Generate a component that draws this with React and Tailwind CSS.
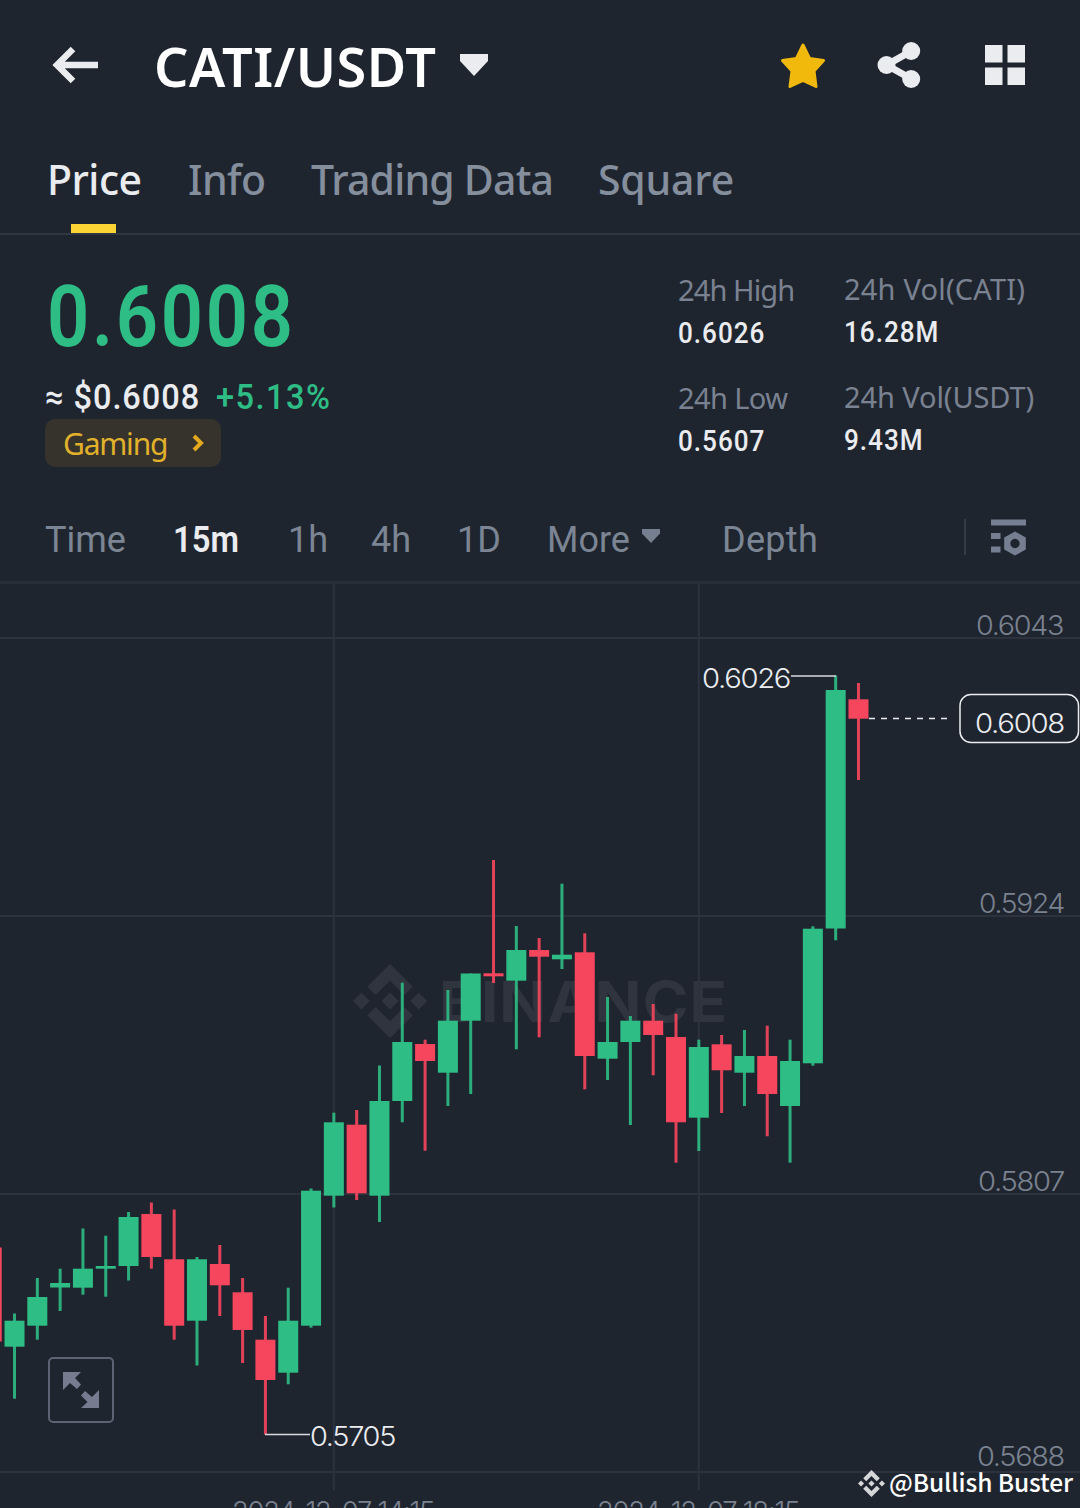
const UP = '#2ebd85';
const DOWN = '#f6465d';

const TABS = [
  { label: 'Price', active: true, className: 'w-[141px] tracking-[-0.5px]' },
  { label: 'Info', className: 'w-[123px] tracking-[-0.6px]' },
  { label: 'Trading Data', className: 'w-[287px] tracking-[-0.8px]' },
  { label: 'Square', className: 'tracking-[-0.2px]' },
];

const STATS = [
  [
    { label: '24h High', value: '0.6026', className: 'tracking-[-0.9px]' },
    { label: '24h Low', value: '0.5607', className: 'tracking-[-0.6px]' },
  ],
  [
    { label: '24h Vol(CATI)', value: '16.28M', className: 'tracking-[0.2px]' },
    { label: '24h Vol(USDT)', value: '9.43M', className: 'tracking-[-0.1px]' },
  ],
];

const INTERVALS = [
  { label: 'Time', className: 'w-[128px]' },
  { label: '15m', active: true, className: 'w-[115px]' },
  { label: '1h', className: 'w-[83px]' },
  { label: '4h', className: 'w-[86px]' },
  { label: '1D', className: 'w-[90px]' },
];

// [up, bodyTop, bodyBottom, high, low]
const CANDLES = [
  [0, 1247.5, 1341.5, 1247.5, 1341.5],
  [1, 1320.7, 1346.7, 1313.5, 1398.7],
  [1, 1297, 1325.7, 1278, 1339.7],
  [1, 1283, 1287.5, 1268.7, 1311],
  [1, 1268.7, 1287.7, 1228.5, 1294.7],
  [1, 1266, 1268.7, 1235.7, 1296.7],
  [1, 1217, 1266, 1212, 1280.5],
  [0, 1214, 1257, 1202.5, 1268.7],
  [0, 1259.3, 1325.7, 1209.5, 1339.7],
  [1, 1259.3, 1320.7, 1257, 1365.5],
  [0, 1264, 1285.3, 1245, 1316],
  [0, 1292.3, 1330, 1278, 1363],
  [0, 1339.7, 1380, 1316, 1434.5],
  [1, 1320.7, 1372.7, 1287.7, 1384.3],
  [1, 1190.7, 1325.7, 1188.5, 1327.7],
  [1, 1122.3, 1195.7, 1112.7, 1207.5],
  [0, 1124.7, 1193.3, 1110, 1200],
  [1, 1101, 1195.7, 1065.5, 1222],
  [1, 1042, 1101, 982.7, 1122.3],
  [0, 1044, 1061, 1039.7, 1150.7],
  [1, 1020.7, 1072.7, 990, 1106],
  [1, 973.5, 1020.7, 973.5, 1094],
  [0, 973.3, 976.3, 860, 983],
  [1, 950, 980.7, 926, 1049.3],
  [0, 950, 956.7, 938, 1037.3],
  [1, 954.7, 959.3, 883.7, 969],
  [0, 952.3, 1056, 933.3, 1089.3],
  [1, 1042, 1058.7, 997, 1080],
  [1, 1020.7, 1042, 1016, 1125],
  [0, 1020.7, 1035, 1004, 1075.3],
  [0, 1037, 1122.3, 1013.7, 1162.7],
  [1, 1047, 1117.7, 1039.7, 1151],
  [0, 1044.3, 1070.3, 1035, 1113],
  [1, 1056, 1072.7, 1030, 1106],
  [0, 1056, 1094, 1025.7, 1136.3],
  [1, 1061, 1106, 1039.7, 1162.7],
  [1, 928.7, 1063.3, 926.3, 1065.7],
  [1, 690, 928.5, 675.5, 940.3],
  [0, 699.3, 718.7, 683, 780],
];

const LOGO =
  'M38.73 53.2l24.59-24.58 24.6 24.6 14.3-14.31L63.32 0 24.43 38.9zM0 63.31l14.3-14.31 14.31 14.31-14.31 14.3zM38.73 73.41l24.59 24.59 24.6-24.6 14.31 14.29-38.9 38.91-38.91-38.88zM98 63.31l14.3-14.31 14.31 14.3-14.31 14.32zM77.83 63.3L63.32 48.78 48.78 63.3l14.53 14.53z';

const Header = () => (
  <header className="flex h-[130px] items-center pl-[52px] pr-[55px]">
    <svg width="46" height="38" viewBox="0 0 46 38" fill="none" stroke="#eaecef" strokeWidth="6.5">
      <path d="M4 19H46M21 3L5 19l16 16" />
    </svg>
    <h1 className="ml-[56px] w-[306px] whitespace-nowrap pt-[2px] text-[54px] font-semibold leading-none tracking-[0.5px] text-white">
      CATI/USDT
    </h1>
    <svg width="28" height="22" viewBox="0 0 28 22" fill="#eaecef">
      <path d="M0 0H28V7L14 22L0 7Z" />
    </svg>
    <svg className="ml-auto" width="46" height="46" viewBox="0 0 46 46">
      <path
        d="M23 3L29.5 16.5L43.5 18.5L34 29L36 44.5L23 38.5L10 44.5L12 29L2.5 18.5L16.5 16.5Z"
        fill="#f0b90b"
        stroke="#f0b90b"
        strokeWidth="3"
        strokeLinejoin="round"
      />
    </svg>
    <svg className="ml-[51px]" width="44" height="46" viewBox="0 0 44 46" fill="#eaecef">
      <path d="M34.5 9L9.5 23l25 14" fill="none" stroke="#eaecef" strokeWidth="7" />
      <circle cx="9.5" cy="23" r="9" />
      <circle cx="34.2" cy="9" r="9" />
      <circle cx="34.2" cy="37" r="9" />
    </svg>
    <svg className="ml-[64px]" width="40" height="40" viewBox="0 0 40 40" fill="#eaecef">
      <path d="M0 0h17.5v17.5H0zM22.5 0H40v17.5H22.5zM0 22.5h17.5V40H0zM22.5 22.5H40V40H22.5z" />
    </svg>
  </header>
);

const Tabs = () => (
  <nav className="flex h-[105px] border-b-2 border-[#2f3641] pl-[47px] pt-[21px] text-[41px] font-medium leading-[56px]">
    {TABS.map((tab) => (
      <div key={tab.label} className={tab.className}>
        <div className={`w-fit whitespace-nowrap ${tab.active ? 'text-[#eaecef]' : 'text-[#848e9c]'}`}>
          {tab.label}
          {tab.active && <div className="ml-6 mt-[17px] h-[9px] w-[45px] bg-[#fcd535]" />}
        </div>
      </div>
    ))}
  </nav>
);

const Summary = () => (
  <section className="flex h-[265px] pl-[45px] pt-[30px]">
    <div className="w-[633px]">
      <div className="ml-[2px] h-[102px] origin-left scale-x-[0.86] font-[Roboto] text-[86px] font-semibold leading-[104px] tracking-[3.2px] text-[#2ebd85]">
        0.6008
      </div>
      <div className="flex h-[52px] items-center pt-[8px] font-[Roboto] text-[35px] font-medium leading-none">
        <span className="w-[171px] origin-left scale-x-[0.93] whitespace-nowrap tracking-[1px] text-[#eaecef]">
          ≈ $0.6008
        </span>
        <span className="origin-left scale-x-[0.93] tracking-[1.6px] text-[#2ebd85]">+5.13%</span>
      </div>
      <div className="flex h-12 w-[176px] items-center rounded-[10px] bg-[#35332c] pl-[18px] text-[30px] text-[#e2b12b]">
        <span className="w-[129px] pt-[2px] leading-none tracking-[-1.2px]">Gaming</span>
        <svg width="12" height="18" viewBox="0 0 12 18" fill="none" stroke="#e2a91e" strokeWidth="4">
          <path d="M2 2l7 7-7 7" />
        </svg>
      </div>
    </div>
    {STATS.map((column, i) => (
      <div key={i} className={i === 0 ? 'w-[166px] pt-[4px]' : 'pt-[3px]'}>
        {column.map((stat) => (
          <div key={stat.label} className="h-[108px] whitespace-nowrap">
            <div className={`text-[29px] leading-[41px] text-[#7a8291] ${stat.className}`}>{stat.label}</div>
            <div className="origin-left scale-x-[0.9] pt-[2px] font-[Roboto] text-[29px] font-medium leading-[42px] tracking-[1.1px] text-[#eaecef]">
              {stat.value}
            </div>
          </div>
        ))}
      </div>
    ))}
  </section>
);

const IntervalBar = () => (
  <nav className="flex h-[84px] items-center border-b-[3px] border-[#282e38] pl-[45px] font-[Roboto] text-[36px] leading-none text-[#7c8594]">
    {INTERVALS.map((item) => (
      <div
        key={item.label}
        className={`whitespace-nowrap pb-[2px] ${item.className} ${
          item.active ? 'origin-left scale-x-[0.91] font-semibold text-[#eaecef]' : ''
        }`}
      >
        {item.label}
      </div>
    ))}
    <div className="flex w-[175px] items-center pb-[2px]">
      <span className="w-[95px]">More</span>
      <svg className="-mt-2" width="18" height="14" viewBox="0 0 18 14" fill="#767f8f">
        <path d="M0 0H18V4.5L9 14L0 4.5Z" />
      </svg>
    </div>
    <div className="pb-[2px] tracking-[0.3px]">Depth</div>
    <div className="ml-auto mr-[53px] flex items-center pb-[7px]">
      <div className="mr-[25px] h-9 w-[2.5px] bg-[#343b47]" />
      <svg width="36" height="37" viewBox="0 0 36 37" fill="#767f92">
        <path d="M0 0.5h35v6H0zM0 14h9.5v6H0zM0 27.5h9.5v6H0z" />
        <path
          fillRule="evenodd"
          d="M24 12.5L34.8 18.5V30.5L24 36.5L13.2 30.5V18.5ZM24 19.8a4.7 4.7 0 1 0 0.01 0Z"
        />
      </svg>
    </div>
  </nav>
);

const AxisText = ({ x, y, width = 87, fill = '#7b828f', children }) => (
  <text x={x} y={y} textLength={width} lengthAdjust="spacingAndGlyphs" fill={fill}>
    {children}
  </text>
);

const Chart = () => (
  <div className="relative h-[924px]">
    <svg
      className="block font-[Inter] text-[26.5px] font-light tracking-[-1.2px]"
      width="1080"
      height="924"
      viewBox="0 584 1080 924"
    >
      <g fill="#30343f">
        <path d={LOGO} transform="translate(353 964) scale(0.585)" />
        <text
          x="439"
          y="1022"
          className="text-[57px] font-bold tracking-[1px]"
          textLength="289"
          lengthAdjust="spacingAndGlyphs"
        >
          BINANCE
        </text>
      </g>

      <g stroke="#2d333e" strokeWidth="2">
        {[638, 916, 1194, 1472].map((y) => (
          <line key={y} x1="0" x2="1080" y1={y} y2={y} />
        ))}
        {[333.8, 698.8].map((x) => (
          <line key={x} x1={x} x2={x} y1="584" y2="1490" />
        ))}
      </g>

      {CANDLES.map(([up, top, bottom, high, low], i) => {
        const x = -8.3 + i * 22.81;
        return (
          <g key={i} fill={up ? UP : DOWN}>
            <rect x={x - 1.5} y={high} width="3" height={low - high} opacity="0.9" />
            <rect x={x - 10} y={top} width="20" height={bottom - top} />
          </g>
        );
      })}

      <AxisText x="976" y="635">0.6043</AxisText>
      <AxisText x="979" y="913" width={85}>0.5924</AxisText>
      <AxisText x="978" y="1191" width={86}>0.5807</AxisText>
      <AxisText x="977" y="1466">0.5688</AxisText>
      <AxisText x="232" y="1521" width={202}>2024-12-07 14:15</AxisText>
      <AxisText x="597" y="1521" width={202}>2024-12-07 18:15</AxisText>

      <AxisText x="702" y="688" width={88} fill="#eaecef">0.6026</AxisText>
      <path d="M791 676H836M265 1434.5H310" stroke="#d8dade" strokeWidth="1.7" />
      <AxisText x="310" y="1446" width={85} fill="#eaecef">0.5705</AxisText>

      <path d="M869 718.5H947" stroke="#eaecef" strokeWidth="1.5" strokeDasharray="6 6" />
      <rect x="960" y="694.5" width="118.5" height="48" rx="11" fill="none" stroke="#eaecef" strokeWidth="1.5" />
      <AxisText x="975" y="733" width={89} fill="#eaecef">0.6008</AxisText>
    </svg>

    <button className="absolute left-12 top-[773px] flex h-[66px] w-[66px] items-center justify-center rounded-[5px] border-2 border-[#5d6375]">
      <svg width="36" height="36" viewBox="0 0 36 36" fill="#767b8f">
        <path d="M0 0H18L12 6L18 12.5L14 17L7 11L0 18ZM36 36H18L24.5 30L18 23.5L22 19L29 25L36 18Z" />
      </svg>
    </button>

    <div className="absolute right-[7px] top-[886px] flex items-center">
      <svg width="27" height="27" viewBox="0 0 126.61 126.61" fill="#d5d6d8">
        <path d={LOGO} />
      </svg>
      <span className="-mt-[3px] ml-[4px] whitespace-nowrap font-['Noto_Sans_CJK_SC',sans-serif] text-[24.5px] font-medium leading-[26px] tracking-[-0.1px] text-white">
        @Bullish Buster
      </span>
    </div>
  </div>
);

const App = () => (
  <div className="h-[1508px] w-[1080px] overflow-hidden bg-[#1f252f] font-['Noto_Sans',sans-serif]">
    <Header />
    <Tabs />
    <Summary />
    <IntervalBar />
    <Chart />
  </div>
);

export default App;
